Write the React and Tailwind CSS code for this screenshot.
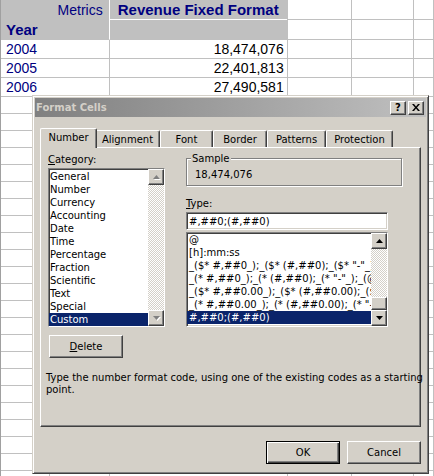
import React from 'react';

// classic win32 colours
const raised =
  'border border-t-white border-l-white border-r-[#404040] border-b-[#404040] shadow-[inset_-1px_-1px_#808080]';
const sunken =
  'border border-t-[#808080] border-l-[#808080] border-r-white border-b-white shadow-[inset_1px_1px_#404040,inset_-1px_-1px_#d4d0c8]';
const checker =
  'bg-[repeating-conic-gradient(#ffffff_0%_25%,#d4d0c8_0%_50%)] bg-[length:2px_2px]';

const categories = [
  'General', 'Number', 'Currency', 'Accounting', 'Date', 'Time',
  'Percentage', 'Fraction', 'Scientific', 'Text', 'Special', 'Custom',
];

const formats = [
  '@',
  '[h]:mm:ss',
  '_($* #,##0_);_($* (#,##0);_($* "-"_);_(@_)',
  '_(* #,##0_);_(* (#,##0);_(* "-"_);_(@_)',
  '_($* #,##0.00_);_($* (#,##0.00);_($* "-"??_);_(@_)',
  '_(* #,##0.00_);_(* (#,##0.00);_(* "-"??_);_(@_)',
  '#,##0;(#,##0)',
];

function Arrow({ down, disabled }) {
  const pts = down ? '0,0 7,0 3.5,4' : '3.5,0 7,4 0,4';
  return (
    <svg width="7" height="4" viewBox="0 0 7 4" className={disabled ? 'drop-shadow-[1px_1px_0_#fff]' : ''}>
      <polygon points={pts} fill={disabled ? '#808080' : '#000'} />
    </svg>
  );
}

function ScrollButton({ down, disabled }) {
  return (
    <div className={`w-[16px] h-[16px] bg-[#d4d0c8] flex items-center justify-center ${raised}`}>
      <Arrow down={down} disabled={disabled} />
    </div>
  );
}

function Button({ children, isDefault, className = '' }) {
  const cls = isDefault
    ? 'border border-black shadow-[inset_1px_1px_#fff,inset_-1px_-1px_#404040,inset_-2px_-2px_#808080]'
    : raised;
  return (
    <div className={`h-[23px] w-[74px] bg-[#d4d0c8] flex items-center justify-center text-black ${cls} ${className}`}>
      {children}
    </div>
  );
}

function Sheet() {
  const line = 'border-[#c0c0c0]';
  const lower = Array.from({ length: 23 });
  return (
    <div className="font-['Liberation_Sans',Arial,sans-serif] text-[14px] leading-none border-l border-[#a0a0a0]">
      {/* pivot header */}
      <div className="flex">
        <div className="w-[110px] h-[40px] bg-[#c0c0c0] border-r border-r-white border-b border-b-[#c0c0c0] flex flex-col text-[#000080]">
          <div className="h-[20px] flex items-center justify-end pr-[6px]">Metrics</div>
          <div className="h-[19px] flex items-center pl-[5px] font-bold text-[15px]">Year</div>
        </div>
        <div className="w-[180px] flex flex-col border-r border-[#c0c0c0]">
          <div className="h-[20px] bg-[#c0c0c0] border-b border-white flex items-center justify-center font-bold text-[15px] text-[#000080]">
            Revenue Fixed Format
          </div>
          <div className="h-[20px] bg-[#c0c0c0] border-b border-[#c0c0c0]" />
        </div>
        {[65, 63, 20].map((w, i) => (
          <div key={i} className={`flex flex-col border-r ${line}`} style={{ width: w }}>
            <div className={`h-[20px] border-b ${line}`} />
            <div className={`h-[20px] border-b ${line}`} />
          </div>
        ))}
      </div>
      {/* data rows */}
      {[
        ['2004', '18,474,076'],
        ['2005', '22,401,813'],
        ['2006', '27,490,581'],
      ].map(([y, v]) => (
        <div key={y} className="flex h-[19px]">
          <div className={`w-[110px] border-r border-b ${line} flex items-center pl-[5px] text-[#000080]`}>{y}</div>
          <div className={`w-[180px] border-r border-b ${line} flex items-center justify-end pr-[3px] text-black`}>{v}</div>
          <div className={`w-[65px] border-r border-b ${line}`} />
          <div className={`w-[63px] border-r border-b ${line}`} />
          <div className={`w-[20px] border-r border-b ${line}`} />
        </div>
      ))}
      {lower.map((_, i) => (
        <div key={i} className="flex h-[17px]">
          <div className={`w-[50px] border-r border-b ${line}`} />
          <div className={`w-[60px] border-r border-b ${line}`} />
          <div className={`w-[180px] border-r border-b ${line}`} />
          <div className={`w-[65px] border-r border-b ${line}`} />
          <div className={`w-[63px] border-r border-b ${line}`} />
          <div className={`w-[20px] border-r border-b ${line}`} />
        </div>
      ))}
    </div>
  );
}

function Tabs() {
  const tabs = [
    ['Number', 53],
    ['Alignment', 65],
    ['Font', 53],
    ['Border', 54],
    ['Patterns', 59],
    ['Protection', 67],
  ];
  return (
    <div className="h-[19px] flex items-end pl-[2px]">
      {tabs.map(([t, w], i) =>
        i === 0 ? (
          <div
            key={t}
            className="relative top-[1px] z-10 h-[20px] -mx-[2px] bg-[#d4d0c8] border-t border-l border-r border-t-white border-l-white border-r-[#404040] rounded-t-[2px] shadow-[inset_-1px_0_#808080] flex items-center justify-center pb-[2px]"
            style={{ width: w + 4 }}
          >
            {t}
          </div>
        ) : (
          <div
            key={t}
            className="h-[17px] border-t border-l border-r border-t-white border-l-white border-r-[#404040] rounded-t-[2px] shadow-[inset_-1px_0_#808080] flex items-center justify-center"
            style={{ width: w }}
          >
            {t}
          </div>
        )
      )}
    </div>
  );
}

function Dialog() {
  return (
    <div className="absolute left-[32px] top-[95px] w-[397px] h-[379px] bg-[#d4d0c8] border border-t-[#d4d0c8] border-l-[#d4d0c8] border-r-[#404040] border-b-[#404040] shadow-[inset_1px_1px_#fff,inset_-1px_-1px_#808080] p-[2px] font-['DejaVu_Sans',Verdana,sans-serif] text-[10px] leading-[13px] text-black">
      {/* title bar */}
      <div className="h-[19px] bg-linear-to-r from-[#808080] to-[#c0c0c0] flex items-center justify-between pl-[1px] pr-[2px]">
        <span className="font-bold text-[#d4d0c8] text-[10px]">Format Cells</span>
        <div className="flex gap-[2px]">
          <div className={`w-[16px] h-[14px] bg-[#d4d0c8] flex items-center justify-center font-bold text-[10px] ${raised}`}>?</div>
          <div className={`w-[16px] h-[14px] bg-[#d4d0c8] flex items-center justify-center ${raised}`}>
            <svg width="8" height="7" viewBox="0 0 8 7">
              <path d="M0 0h2l2 2.5L6 0h2L5 3.5 8 7H6L4 4.5 2 7H0l3-3.5z" fill="#000" />
            </svg>
          </div>
        </div>
      </div>

      <div className="px-[5px] pt-[11px]">
        <Tabs />
        {/* tab panel */}
        <div className={`h-[280px] ${raised} pt-[5px] pl-[7px]`}>
          <div className="flex">
            {/* category */}
            <div className="w-[117px] flex flex-col">
              <div className="h-[13px]"><u className="underline-offset-1">C</u>ategory:</div>
              <div className={`mt-[2px] h-[159px] bg-white flex ${sunken}`}>
                <div className="flex-1 pt-[1px]">
                  {categories.map((c) => (
                    <div
                      key={c}
                      className={`h-[13px] pl-[1px] whitespace-nowrap ${c === 'Custom' ? 'bg-[#0a246a] text-white' : ''}`}
                    >
                      {c}
                    </div>
                  ))}
                </div>
                <div className="w-[16px] flex flex-col">
                  <ScrollButton disabled />
                  <div className={`flex-1 ${checker}`} />
                  <ScrollButton down disabled />
                </div>
              </div>
              <Button className="mt-[8px] ml-[1px] h-[22px]">
                <span><u className="underline-offset-1">D</u>elete</span>
              </Button>
            </div>

            {/* type */}
            <div className="ml-[21px] flex flex-col">
              <div className="relative mt-[5px] h-[28px] w-[216px] border border-[#808080] shadow-[1px_1px_#fff,inset_1px_1px_#fff] pl-[8px] pt-[9px]">
                <span className="absolute -top-[7px] left-[4px] bg-[#d4d0c8] px-[1px]">Sample</span>
                18,474,076
              </div>
              <div className="mt-[11px] h-[13px]"><u className="underline-offset-1">T</u>ype:</div>
              <div className={`mt-[2px] h-[18px] w-[202px] bg-white flex items-center pl-[2px] ${sunken}`}>
                #,##0;(#,##0)
              </div>
              <div className={`mt-[2px] h-[95px] w-[202px] bg-white flex ${sunken}`}>
                <div className="flex-1 overflow-hidden">
                  {formats.map((f, i) => (
                    <div
                      key={i}
                      className={`h-[13px] pl-[2px] whitespace-nowrap overflow-hidden ${i === formats.length - 1 ? 'bg-[#0a246a] text-white' : ''}`}
                    >
                      {f}
                    </div>
                  ))}
                </div>
                <div className="w-[16px] flex flex-col">
                  <ScrollButton />
                  <div className={`flex-1 ${checker}`} />
                  <div className={`h-[13px] bg-[#d4d0c8] ${raised}`} />
                  <ScrollButton down />
                </div>
              </div>
            </div>
          </div>

          <p className="mt-[14px] -ml-[2px] leading-[12px] whitespace-nowrap">
            Type the number format code, using one of the existing codes as a starting
            <br />
            point.
          </p>
        </div>

        <div className="mt-[14px] flex justify-end gap-[7px]">
          <Button isDefault>OK</Button>
          <Button>Cancel</Button>
        </div>
      </div>
    </div>
  );
}

export default function App() {
  return (
    <div className="relative w-[434px] h-[476px] overflow-hidden bg-white">
      <Sheet />
      <Dialog />
    </div>
  );
}
